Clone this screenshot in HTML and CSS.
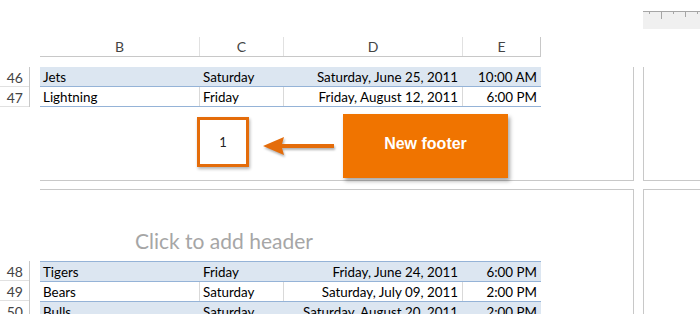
FILE: index.html
```html
<!DOCTYPE html>
<html>
<head>
<title>Page Layout - footer</title>
<link rel="stylesheet" href="styles.css">
</head>
<body>
  <div class="view">
    <div class="topbar">
      <div class="ruler">
        <span class="tick short"></span>
        <span class="tick long"></span>
        <span class="tick short"></span>
        <span class="tick mid"></span>
        <span class="tick short"></span>
      </div>
    </div>

    <div class="colheads">
      <div class="colhead col-b">B</div>
      <div class="colhead col-c">C</div>
      <div class="colhead col-d">D</div>
      <div class="colhead col-e">E</div>
    </div>

    <!-- first printed page (bottom part) -->
    <div class="band band-top">
      <div class="rownums">
        <div class="rownum">46</div>
        <div class="rownum">47</div>
      </div>
      <div class="page">
        <div class="row shaded">
          <div class="cell col-b">Jets</div>
          <div class="cell col-c">Saturday</div>
          <div class="cell col-d num">Saturday, June 25, 2011</div>
          <div class="cell col-e num">10:00 AM</div>
        </div>
        <div class="row">
          <div class="cell col-b">Lightning</div>
          <div class="cell col-c">Friday</div>
          <div class="cell col-d num">Friday, August 12, 2011</div>
          <div class="cell col-e num">6:00 PM</div>
        </div>
        <div class="footer-zone">
          <div class="footer-box">1</div>
          <svg class="arrow" width="72" height="22" viewBox="0 0 72 22">
            <polygon points="0,11 21,2 19,9 71,9 71,13 19,13 21,20" fill="#e46c0a"/>
          </svg>
          <div class="callout">New footer</div>
        </div>
      </div>
      <div class="page side"></div>
    </div>

    <!-- second printed page (top part) -->
    <div class="band band-bottom">
      <div class="rownums">
        <div class="rownum first">48</div>
        <div class="rownum">49</div>
        <div class="rownum">50</div>
      </div>
      <div class="page">
        <div class="header-zone">Click to add header</div>
        <div class="row shaded first">
          <div class="cell col-b">Tigers</div>
          <div class="cell col-c">Friday</div>
          <div class="cell col-d num">Friday, June 24, 2011</div>
          <div class="cell col-e num">6:00 PM</div>
        </div>
        <div class="row">
          <div class="cell col-b">Bears</div>
          <div class="cell col-c">Saturday</div>
          <div class="cell col-d num">Saturday, July 09, 2011</div>
          <div class="cell col-e num">2:00 PM</div>
        </div>
        <div class="row shaded">
          <div class="cell col-b">Bulls</div>
          <div class="cell col-c">Saturday</div>
          <div class="cell col-d num">Saturday, August 20, 2011</div>
          <div class="cell col-e num">2:00 PM</div>
        </div>
      </div>
      <div class="page side"></div>
    </div>
  </div>
</body>
</html>
```

FILE: styles.css
```css
* {
  margin: 0;
  padding: 0;
  box-sizing: border-box;
}
body {
  background: #ffffff;
  font-family: Lato, "Open Sans", sans-serif;
}

.view {
  width: 700px;
  height: 314px;
  overflow: hidden;
  background: #ffffff;
  color: #000000;
}

/* ruler in the top right corner */
.topbar {
  height: 37px;
  display: flex;
  justify-content: flex-end;
  align-items: flex-start;
}
.ruler {
  margin-top: 11px;
  width: 57px;
  height: 18px;
  background: #f0f0f0;
  border-top: 1px solid #a6a6a6;
  display: flex;
  align-items: flex-start;
  padding-left: 6px;
  gap: 11px;
}
.tick {
  display: block;
  width: 1px;
  background: #a6a6a6;
}
.tick.short { height: 2px; }
.tick.mid { height: 5px; }
.tick.long { height: 7px; }

/* column letters */
.colheads {
  margin-left: 40px;
  width: 501px;
  height: 20px;
  display: flex;
  border-bottom: 1px solid #c8c8c8;
}
.colhead {
  height: 19px;
  line-height: 19px;
  text-align: center;
  font-size: 14px;
  color: #444444;
  border-right: 1px solid #e1e1e1;
}
.colhead.col-e { border-right-color: #c8c8c8; }

.col-b { width: 160px; }
.col-c { width: 84px; }
.col-d { width: 179px; }
.col-e { width: 78px; }

/* page bands */
.band {
  display: flex;
  align-items: flex-start;
}
.band-top {
  margin-top: 10px;
  height: 114px;
}
.band-bottom {
  margin-top: 8px;
  height: 130px;
}
.rownums {
  width: 30px;
  margin-right: 10px;
  border-right: 1px solid #c8c8c8;
}
.band-bottom .rownums {
  margin-top: 72px;
}
.rownum {
  height: 20px;
  line-height: 21px;
  overflow: hidden;
  text-align: right;
  padding-right: 6px;
  font-size: 14px;
  color: #444444;
  border-bottom: 1px solid #e1e1e1;
}
.page {
  width: 594px;
  height: 114px;
  border-right: 1px solid #c8c8c8;
  border-bottom: 1px solid #c8c8c8;
}
.page.side {
  margin-left: 9px;
  flex: 1;
  border-right: 0;
  border-left: 1px solid #c8c8c8;
}
.band-bottom .page {
  height: 130px;
  border-bottom: 0;
  border-top: 1px solid #c8c8c8;
}

/* table rows */
.row {
  display: flex;
  width: 501px;
  height: 20px;
  border-bottom: 1px solid #95b3d7;
}
.row.first {
  height: 21px;
  border-top: 1px solid #95b3d7;
}
.row.shaded {
  background: #dce6f1;
}
.cell {
  height: 19px;
  line-height: 21px;
  font-size: 13.4px;
  padding: 0 3px;
  white-space: nowrap;
  overflow: hidden;
  border-right: 1px solid #d9d9d9;
}
.row .col-e { border-right: 0; }
.row.shaded .cell { border-right-color: transparent; }
.cell.num {
  text-align: right;
  padding-right: 4px;
}

/* footer with callout */
.footer-zone {
  display: flex;
  align-items: flex-start;
  padding-left: 157px;
}
.footer-box {
  margin-top: 10px;
  width: 52px;
  height: 50px;
  border: 3px solid #e46c0a;
  box-shadow: 1px 2px 3px rgba(0, 0, 0, 0.3);
  display: flex;
  align-items: center;
  justify-content: center;
  font-size: 13px;
  color: #222222;
}
.arrow {
  margin-top: 28px;
  margin-left: 14px;
  filter: drop-shadow(1px 2px 1px rgba(0, 0, 0, 0.3));
}
.callout {
  margin-top: 7px;
  margin-left: 8px;
  width: 165px;
  height: 64px;
  background: #f07400;
  box-shadow: 2px 3px 4px rgba(0, 0, 0, 0.35);
  color: #ffffff;
  font-family: "Liberation Sans", Arial, sans-serif;
  font-weight: bold;
  font-size: 16px;
  display: flex;
  align-items: center;
  justify-content: center;
  padding-bottom: 4px;
}

/* header placeholder */
.header-zone {
  height: 71px;
  padding-top: 39px;
  padding-left: 95px;
  font-size: 21px;
  line-height: 24px;
  color: #a6a6a6;
}
```
